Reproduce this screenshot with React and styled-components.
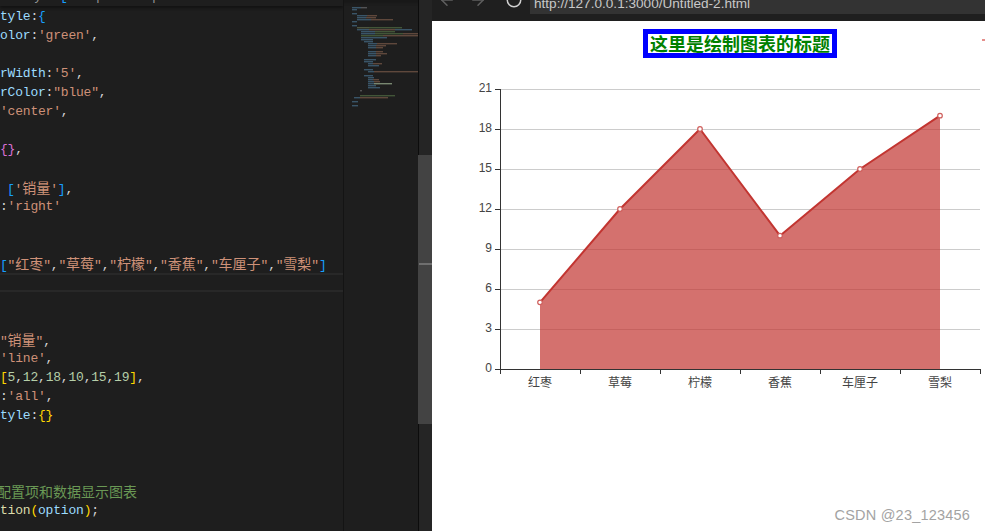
import React from "react";
import styled, { createGlobalStyle } from "styled-components";
import { ArrowLeft, ArrowRight, RotateCw } from "lucide-react";

const GlobalStyle = createGlobalStyle`
  html, body {
    margin: 0;
    padding: 0;
    background: #1e1e1e;
    overflow: hidden;
  }
`;

const Page = styled.div`
  position: relative;
  display: flex;
  width: 985px;
  height: 531px;
  overflow: hidden;
`;

const CodePane = styled.div`
  width: 343px;
  flex-shrink: 0;
  background: #1e1e1e;
  border-right: 1px solid #141414;
  overflow: hidden;
`;

const Breadcrumb = styled.div`
  height: 6px;
  overflow: hidden;
  box-shadow: 0 2px 3px #121212;
  position: relative;
  font: 13px/6px "Liberation Mono", monospace;
  color: #9a9a9a;
`;

const Crumb = styled.span`
  position: absolute;
  left: ${p => p.$x}px;
  top: -6px;
  color: ${p => p.$color || "#9a9a9a"};
`;

const CodeBody = styled.div`
  padding-top: 0.5px;
`;

const Line = styled.div`
  box-sizing: border-box;
  height: 19px;
  margin-left: ${p => p.$indent || 0}px;
  font: 13px/19px "Liberation Mono", monospace;
  letter-spacing: -0.2px;
  color: #d4d4d4;
  white-space: pre;
  ${p => p.$current && "border-top: 2px solid #282828; border-bottom: 2px solid #282828;"}
`;

const Prop = styled.span`color: #9cdcfe;`;
const Str = styled.span`color: #ce9178;`;
const Num = styled.span`color: #b5cea8;`;
const Fn = styled.span`color: #dcdcaa;`;
const Bracket = styled.span`color: ${p => p.$color};`;
const Cjk = styled.span`
  font-family: "Noto Sans CJK SC", sans-serif;
  font-size: 14px;
  letter-spacing: 0;
  color: ${p => p.$color || "#ce9178"};
`;

const Minimap = styled.div`
  width: 74px;
  flex-shrink: 0;
  background: #1e1e1e;
  box-shadow: inset 0 6px 3px -3px #181818;
`;

const ScrollTrack = styled.div`
  width: 13px;
  flex-shrink: 0;
  display: flex;
  flex-direction: column;
  background: #252525;
  border-left: 1px solid #0c0c0c;
`;

const ScrollGap = styled.div`
  height: ${p => p.$height}px;
`;

const ScrollThumb = styled.div`
  flex: 1;
  margin-left: -1px;
  background: #434343;
  padding-top: 108px;
`;

const ScrollMark = styled.div`
  height: 2px;
  margin-left: 1px;
  background: #6f6f6f;
`;

const Browser = styled.div`
  flex: 1;
  min-width: 0;
  display: flex;
  flex-direction: column;
  overflow: hidden;
`;

const NavBar = styled.div`
  height: 21px;
  flex-shrink: 0;
  display: flex;
  align-items: flex-start;
  background: #1f1f1f;
  overflow: hidden;
`;

const NavIcon = styled.div`
  width: 18px;
  height: 18px;
  margin: -9px 0 0 ${p => p.$left}px;
  color: ${p => p.$color};
  flex-shrink: 0;
`;

const AddressBar = styled.div`
  flex: 1;
  height: 14px;
  margin-left: 7px;
  padding-left: 4px;
  background: #333333;
  color: #c8c8c8;
  font: 13.6px/8px "Liberation Sans", sans-serif;
  white-space: nowrap;
`;

const Viewport = styled.div`
  flex: 1;
  background: #fff;
  padding: 8px;
`;

const ChartCanvas = styled.div`
  position: relative;
  width: 600px;
  display: flex;
  flex-direction: column;
  align-items: center;
`;

const ChartTitle = styled.div`
  box-sizing: border-box;
  height: 29px;
  padding: 0 2px;
  border: 5px solid blue;
  color: green;
  font: bold 18px/18px "Noto Sans CJK SC", sans-serif;
  white-space: nowrap;
`;

const LegendMark = styled.div`
  position: absolute;
  left: 542px;
  top: 10px;
  width: 25px;
  height: 2px;
  background: #e58f8c;
`;

const Watermark = styled.div`
  position: absolute;
  right: 15px;
  bottom: 8px;
  color: #a3a3a3;
  font: 14.5px/16px "Liberation Sans", sans-serif;
  letter-spacing: 0.2px;
`;

const GridSvg = styled.svg`
  display: block;
  flex-shrink: 0;
`;

const blue = "#179fff";
const gold = "#ffd700";
const pink = "#da70d6";

const categories = ["红枣", "草莓", "柠檬", "香蕉", "车厘子", "雪梨"];
const values = [5, 12, 18, 10, 15, 19];
const yTicks = [0, 3, 6, 9, 12, 15, 18, 21];

const yFor = v => 369 - (v * 280) / 21;
const xFor = i => 540 + i * 80;

// [y, x, width, colour] read off the minimap
const miniRows = [
  [7, 12, 9, "#4d7a99"], [7, 21, 6, "#77777a"], [9, 12, 5, "#4d7a99"],
  [13, 12, 5, "#4d7a99"], [15, 17, 10, "#4d7a99"], [15, 27, 10, "#8a6450"],
  [17, 17, 9, "#4d7a99"], [17, 26, 10, "#8a6450"], [19, 17, 14, "#4d7a99"], [19, 31, 22, "#8a6450"],
  [21, 12, 5, "#4d7a99"], [25, 12, 5, "#4d7a99"], [27, 17, 12, "#6f7a55"], [27, 29, 33, "#5a7a4a"],
  [29, 17, 12, "#4d7a99"], [29, 29, 26, "#8a6450"], [29, 55, 17, "#4d7a99"],
  [31, 21, 14, "#4d7a99"], [31, 35, 20, "#5a7a4a"], [33, 21, 14, "#4d7a99"], [33, 35, 28, "#5a7a4a"], [33, 63, 15, "#8a6450"],
  [35, 21, 22, "#5a7a4a"], [35, 43, 35, "#8a6450"], [37, 21, 26, "#4d7a99"], [39, 21, 12, "#4d7a99"],
  [41, 24, 9, "#4d7a99"], [43, 28, 9, "#4d7a99"], [43, 37, 20, "#8a6450"], [45, 28, 8, "#4d7a99"], [45, 36, 10, "#8a6450"],
  [47, 28, 8, "#4d7a99"], [47, 36, 7, "#8a6450"], [51, 28, 8, "#4d7a99"], [51, 36, 7, "#8a6450"],
  [53, 28, 8, "#4d7a99"], [53, 36, 11, "#8a6450"], [55, 28, 8, "#4d7a99"], [55, 36, 5, "#8a6450"],
  [59, 24, 12, "#4d7a99"], [61, 24, 9, "#4d7a99"], [63, 28, 5, "#4d7a99"], [63, 33, 9, "#8a6450"], [65, 28, 11, "#4d7a99"],
  [69, 24, 9, "#4d7a99"], [71, 28, 6, "#4d7a99"], [71, 34, 44, "#8a6450"], [75, 24, 9, "#4d7a99"], [77, 28, 6, "#4d7a99"],
  [79, 28, 5, "#4d7a99"], [79, 33, 6, "#8a6450"], [81, 28, 6, "#4d7a99"], [81, 34, 6, "#8a6450"], [83, 28, 6, "#4d7a99"], [83, 34, 18, "#b5cea8"],
  [85, 28, 8, "#4d7a99"], [87, 28, 12, "#4d7a99"], [90, 20, 2, "#777"], [95, 20, 15, "#5a7a4a"], [95, 35, 20, "#5a7a4a"],
  [97, 14, 6, "#4d7a99"], [97, 20, 28, "#8a6450"], [101, 12, 6, "#4d7a99"], [105, 12, 6, "#4d7a99"],
];

const App = () => {
  const linePoints = values.map((v, i) => `${xFor(i)},${yFor(v)}`).join(" ");
  const areaPoints = `540,369 ${linePoints} 940,369`;

  return (
    <Page>
      <GlobalStyle />
      <CodePane>
        <Breadcrumb>
          <Crumb $x={34}>y</Crumb>
          <Crumb $x={60} $color={blue}>[</Crumb>
          <Crumb $x={94}>|</Crumb>
          <Crumb $x={150}>|</Crumb>
        </Breadcrumb>
        <CodeBody>
          <Line><Prop>tyle</Prop>:<Bracket $color={blue}>{"{"}</Bracket></Line>
          <Line><Prop>olor</Prop>:<Str>'green'</Str>,</Line>
          <Line />
          <Line><Prop>rWidth</Prop>:<Str>'5'</Str>,</Line>
          <Line><Prop>rColor</Prop>:<Str>"blue"</Str>,</Line>
          <Line><Str>'center'</Str>,</Line>
          <Line />
          <Line><Bracket $color={pink}>{"{}"}</Bracket>,</Line>
          <Line />
          <Line $indent={7}><Bracket $color={blue}>[</Bracket><Str>'<Cjk>销量</Cjk>'</Str><Bracket $color={blue}>]</Bracket>,</Line>
          <Line>:<Str>'right'</Str></Line>
          <Line />
          <Line />
          <Line>
            <Bracket $color={blue}>[</Bracket>
            <Str>"<Cjk>红枣</Cjk>"</Str>,<Str>"<Cjk>草莓</Cjk>"</Str>,<Str>"<Cjk>柠檬</Cjk>"</Str>,<Str>"<Cjk>香蕉</Cjk>"</Str>,<Str>"<Cjk>车厘子</Cjk>"</Str>,<Str>"<Cjk>雪梨</Cjk>"</Str>
            <Bracket $color={blue}>]</Bracket>
          </Line>
          <Line $current />
          <Line />
          <Line />
          <Line><Str>"<Cjk>销量</Cjk>"</Str>,</Line>
          <Line><Str>'line'</Str>,</Line>
          <Line>
            <Bracket $color={gold}>[</Bracket>
            <Num>5</Num>,<Num>12</Num>,<Num>18</Num>,<Num>10</Num>,<Num>15</Num>,<Num>19</Num>
            <Bracket $color={gold}>]</Bracket>,
          </Line>
          <Line>:<Str>'all'</Str>,</Line>
          <Line><Prop>tyle</Prop>:<Bracket $color={gold}>{"{}"}</Bracket></Line>
          <Line />
          <Line />
          <Line />
          <Line $indent={-3}><Cjk $color="#6a9955">配置项和数据显示图表</Cjk></Line>
          <Line><Fn>tion</Fn><Bracket $color={gold}>(</Bracket><Prop>option</Prop><Bracket $color={gold}>)</Bracket>;</Line>
        </CodeBody>
      </CodePane>

      <Minimap>
        <svg width="74" height="120" style={{ display: "block" }}>
          {miniRows.map(([y, x, w, c], i) => (
            <rect key={i} x={x - 4} y={y} width={w} height="1.4" fill={c} opacity="0.6" />
          ))}
        </svg>
      </Minimap>

      <ScrollTrack>
        <ScrollGap $height={155} />
        <ScrollThumb>
          <ScrollMark />
        </ScrollThumb>
        <ScrollGap $height={107} />
      </ScrollTrack>

      <Browser>
        <NavBar>
          <NavIcon $left={6} $color="#5f5f5f"><ArrowLeft size={18} /></NavIcon>
          <NavIcon $left={13} $color="#5f5f5f"><ArrowRight size={18} /></NavIcon>
          <NavIcon $left={18} $color="#d0d0d0"><RotateCw size={18} /></NavIcon>
          <AddressBar>http://127.0.0.1:3000/Untitled-2.html</AddressBar>
        </NavBar>
        <Viewport>
          <ChartCanvas>
            <ChartTitle>这里是绘制图表的标题</ChartTitle>
            <LegendMark />
            <GridSvg width="600" height="371" viewBox="440 58 600 371">
              {yTicks.map(t => (
                <g key={t}>
                  {t > 0 && <line x1="500" x2="980" y1={yFor(t) + 0.5} y2={yFor(t) + 0.5} stroke="#ccc" />}
                  <line x1="495" x2="500" y1={yFor(t) + 0.5} y2={yFor(t) + 0.5} stroke="#333" />
                  <text x="492" y={yFor(t) + 3} textAnchor="end" fontFamily="Liberation Sans, sans-serif" fontSize="12" fill="#444">{t}</text>
                </g>
              ))}
              <polygon points={areaPoints} fill="#c23531" fillOpacity="0.7" />
              <polyline points={linePoints} fill="none" stroke="#c23531" strokeWidth="2" strokeLinejoin="bevel" />
              {values.map((v, i) => (
                <circle key={i} cx={xFor(i)} cy={yFor(v)} r="2.3" fill="#fff" stroke="#cf5f5c" strokeWidth="1.2" />
              ))}
              <line x1="500.5" x2="500.5" y1="89" y2="369" stroke="#333" />
              <line x1="500" x2="981" y1="369.5" y2="369.5" stroke="#333" />
              {[0, 1, 2, 3, 4, 5, 6].map(i => (
                <line key={i} x1={500.5 + i * 80} x2={500.5 + i * 80} y1="369" y2="374" stroke="#333" />
              ))}
              {categories.map((c, i) => (
                <text key={c} x={xFor(i)} y="387" textAnchor="middle" fontFamily="Noto Sans CJK SC, sans-serif" fontSize="12" fill="#444">{c}</text>
              ))}
            </GridSvg>
          </ChartCanvas>
        </Viewport>
      </Browser>
      <Watermark>CSDN @23_123456</Watermark>
    </Page>
  );
};

export default App;
